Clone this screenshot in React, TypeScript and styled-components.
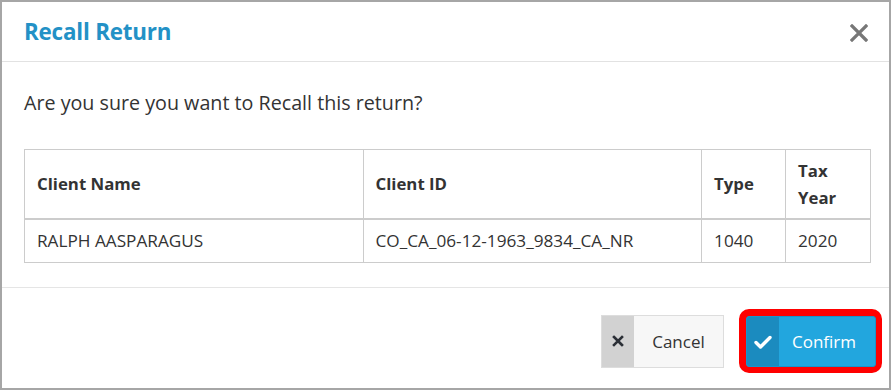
import React from 'react';
import styled, { createGlobalStyle } from 'styled-components';

const GlobalStyle = createGlobalStyle`
  html, body {
    margin: 0;
    padding: 0;
    background: #ffffff;
  }
  body {
    font-family: 'Open Sans', 'Noto Sans', sans-serif;
    color: #333333;
  }
`;

const Modal = styled.div`
  box-sizing: border-box;
  width: 891px;
  height: 390px;
  border: 2px solid #a6a6a6;
  background: #ffffff;
  display: flex;
  flex-direction: column;
`;

const Header = styled.div`
  box-sizing: border-box;
  height: 60px;
  border-bottom: 1px solid #e2e2e2;
  padding: 0 20px 0 22px;
  display: flex;
  align-items: center;
  justify-content: space-between;
`;

const Title = styled.h4`
  margin: 0;
  font-size: 22.4px;
  font-weight: 700;
  color: #2391c6;
  letter-spacing: -0.2px;
`;

const CloseButton = styled.button`
  border: 0;
  background: transparent;
  padding: 0;
  width: 20px;
  height: 20px;
  display: flex;
  align-items: center;
  justify-content: center;
  cursor: pointer;
  margin-top: 3px;
`;

const Body = styled.div`
  padding: 28px 17px 24px 22px;
  border-bottom: 1px solid #e5e5e5;
`;

const Question = styled.p`
  margin: 0 0 33px;
  font-size: 19.7px;
  line-height: 26px;
  color: #333333;
`;

const Table = styled.table`
  width: 847px;
  border-collapse: collapse;
  font-size: 17.2px;
  color: #333333;
`;

const HeadCell = styled.th<{ $w: number }>`
  width: ${(p) => p.$w}px;
  height: 69px;
  box-sizing: border-box;
  border: 1px solid #cccccc;
  border-bottom-width: 2px;
  text-align: left;
  padding: 0 12px;
  font-weight: 700;
  font-size: 16.8px;
  line-height: 27px;
`;

const Cell = styled.td`
  height: 44px;
  box-sizing: border-box;
  border: 1px solid #cccccc;
  padding: 0 12px;
  line-height: 22px;
`;

const Footer = styled.div`
  flex: 1;
  display: flex;
  align-items: center;
  justify-content: flex-end;
  gap: 15px;
  padding: 6px 7px 0 0;
`;

const SplitButton = styled.button<{ $primary?: boolean }>`
  display: flex;
  align-items: stretch;
  padding: 0;
  border: 1px solid ${(p) => (p.$primary ? '#1c93c9' : '#dddddd')};
  border-radius: ${(p) => (p.$primary ? '3px' : '0')};
  background: ${(p) => (p.$primary ? '#22a6de' : '#f7f7f7')};
  color: ${(p) => (p.$primary ? '#ffffff' : '#333333')};
  height: ${(p) => (p.$primary ? '51px' : '53px')};
  width: ${(p) => (p.$primary ? '130px' : '123px')};
  font-family: 'Open Sans', 'Noto Sans', sans-serif;
  font-size: 17px;
  cursor: pointer;
  overflow: hidden;
`;

const IconPart = styled.span<{ $primary?: boolean }>`
  width: 32px;
  flex: none;
  display: flex;
  align-items: center;
  justify-content: center;
  background: ${(p) => (p.$primary ? '#1b8bbf' : '#d2d2d2')};
`;

const LabelPart = styled.span<{ $shift?: number }>`
  flex: 1;
  display: flex;
  align-items: center;
  justify-content: center;
  padding-right: ${(p) => p.$shift ?? 0}px;
`;

const Highlight = styled.div`
  border: 6px solid #ff0000;
  padding: 1px 0 0 1px;
  background: #ff0000;
  border-radius: 10px;
  display: flex;
`;

const rows = [
  { name: 'RALPH AASPARAGUS', id: 'CO_CA_06-12-1963_9834_CA_NR', type: '1040', year: '2020' },
];

export default function App(): JSX.Element {
  return (
    <>
      <GlobalStyle />
      <Modal>
        <Header>
          <Title>Recall Return</Title>
          <CloseButton aria-label="Close">
            <svg width="18" height="18" viewBox="0 0 18 18">
              <path d="M2 2 L16 16 M16 2 L2 16" stroke="#777777" strokeWidth="3.2" strokeLinecap="square" />
            </svg>
          </CloseButton>
        </Header>

        <Body>
          <Question>Are you sure you want to Recall this return?</Question>
          <Table>
            <thead>
              <tr>
                <HeadCell $w={339}>Client Name</HeadCell>
                <HeadCell $w={339}>Client ID</HeadCell>
                <HeadCell $w={84}>Type</HeadCell>
                <HeadCell $w={85}>Tax Year</HeadCell>
              </tr>
            </thead>
            <tbody>
              {rows.map((r) => (
                <tr key={r.id}>
                  <Cell>{r.name}</Cell>
                  <Cell>{r.id}</Cell>
                  <Cell>{r.type}</Cell>
                  <Cell>{r.year}</Cell>
                </tr>
              ))}
            </tbody>
          </Table>
        </Body>

        <Footer>
          <SplitButton>
            <IconPart>
              <svg width="12" height="12" viewBox="0 0 12 12">
                <path d="M2 2 L10 10 M10 2 L2 10" stroke="#2b2f36" strokeWidth="2.6" strokeLinecap="square" />
              </svg>
            </IconPart>
            <LabelPart>Cancel</LabelPart>
          </SplitButton>
          <Highlight>
            <SplitButton $primary>
              <IconPart $primary>
                <svg width="18" height="14" viewBox="0 0 18 14">
                  <path d="M2 7.5 L6.5 12 L16 2.5" stroke="#ffffff" strokeWidth="3.4" fill="none" strokeLinecap="round" strokeLinejoin="round" />
                </svg>
              </IconPart>
              <LabelPart $shift={6}>Confirm</LabelPart>
            </SplitButton>
          </Highlight>
        </Footer>
      </Modal>
    </>
  );
}
